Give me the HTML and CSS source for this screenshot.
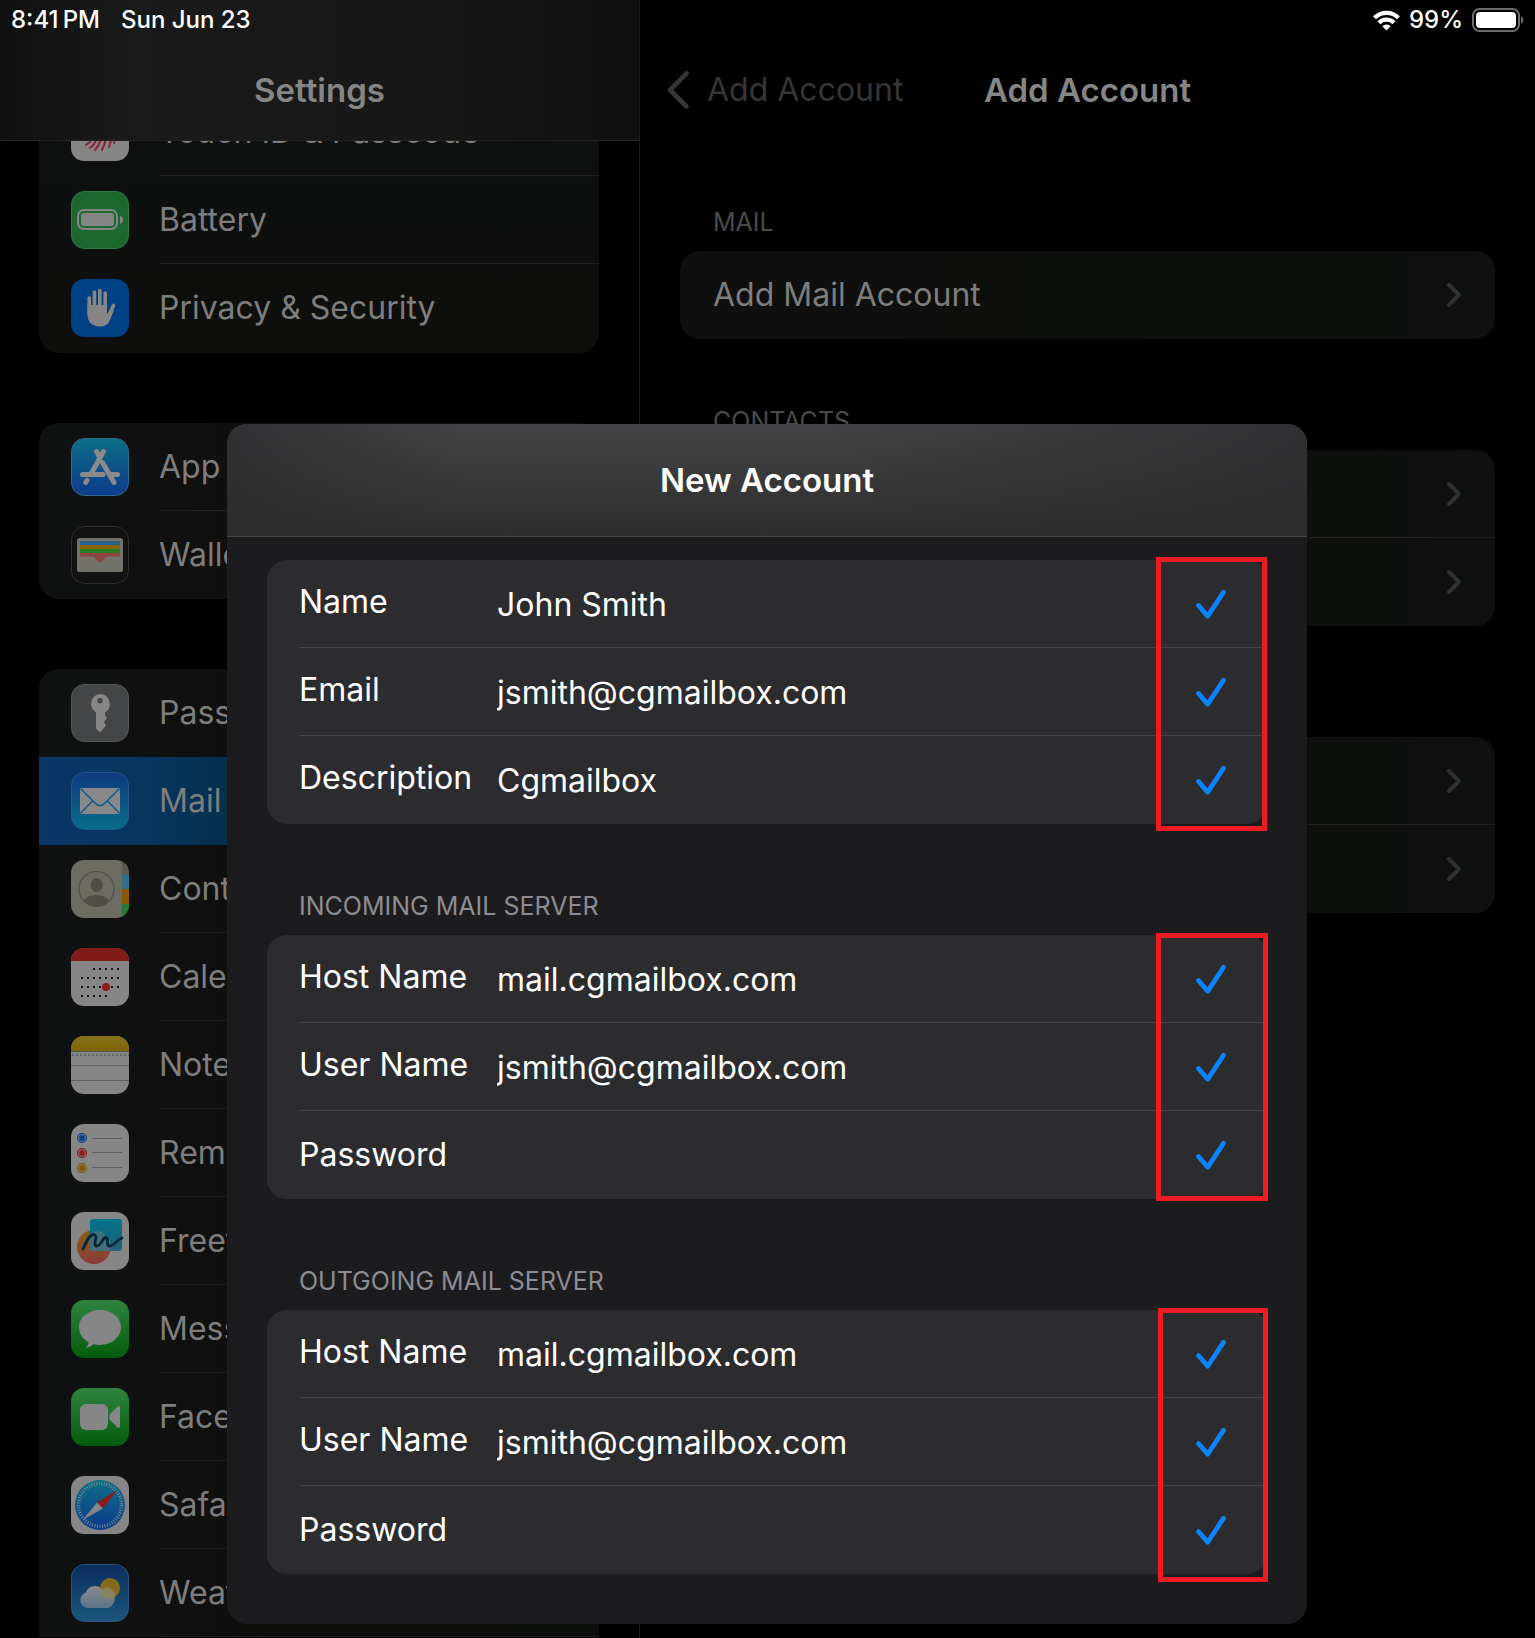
FILE: index.html
```html
<!DOCTYPE html>
<html lang="en">
<head>
<meta charset="utf-8">
<meta name="viewport" content="width=device-width, initial-scale=1">
<title>Settings</title>
<link rel="stylesheet" href="styles.css">
</head>
<body>
<svg class="defs" aria-hidden="true">
  <defs>
    <linearGradient id="g-store" x1="0" y1="0" x2="0" y2="1"><stop offset="0" stop-color="#0c6e85"/><stop offset="1" stop-color="#0d3a8c"/></linearGradient>
    <linearGradient id="g-mail" x1="0" y1="0" x2="0" y2="1"><stop offset="0" stop-color="#0f3880"/><stop offset="1" stop-color="#096e8a"/></linearGradient>
    <linearGradient id="g-green" x1="0" y1="0" x2="0" y2="1"><stop offset="0" stop-color="#2f8340"/><stop offset="1" stop-color="#035d0d"/></linearGradient>
    <linearGradient id="g-notes" x1="0" y1="0" x2="0" y2="1"><stop offset="0" stop-color="#86701d"/><stop offset="1" stop-color="#806500"/></linearGradient>
    <linearGradient id="g-orb" x1="0" y1="0" x2="0" y2="1"><stop offset="0" stop-color="#86600f"/><stop offset="1" stop-color="#8c3a3e"/></linearGradient>
    <linearGradient id="g-pane" x1="0" y1="0" x2="0" y2="1"><stop offset="0" stop-color="#007488"/><stop offset="1" stop-color="#23617c"/></linearGradient>
    <linearGradient id="g-sky" x1="0" y1="0" x2="0" y2="1"><stop offset="0" stop-color="#0a2e5e"/><stop offset="1" stop-color="#1b567c"/></linearGradient>
    <linearGradient id="g-cloud" x1="0" y1="0" x2="0" y2="1"><stop offset="0" stop-color="#8a8b8c"/><stop offset="1" stop-color="#5d7488"/></linearGradient>
    <clipPath id="tile"><rect width="58" height="58" rx="13"/></clipPath>
    <symbol id="chevron" viewBox="0 0 14 24"><path d="M2 2 12 12 2 22" fill="none" stroke="currentColor" stroke-width="4" stroke-linecap="round" stroke-linejoin="round"/></symbol>
    <symbol id="check" viewBox="0 0 30 30"><path d="M2.500 16.500 11.700 27.200 27.500 3.200" fill="none" stroke="currentColor" stroke-width="4.800" stroke-linecap="round" stroke-linejoin="round"/></symbol>
  </defs>
</svg>

<div class="screen">
  <div class="status">
    <time>8:41&#8201;PM</time>
    <span class="status-date">Sun Jun 23</span>
    <svg class="wifi" viewBox="0 0 27 21" aria-label="Wi-Fi"><g fill="none" stroke="#fff" stroke-width="4.200"><path d="M1.500 7.800a17 17 0 0 1 24 0"/><path d="M6 12.700a10.600 10.600 0 0 1 15 0"/></g><path d="M13.500 20.500 9.300 16.200a6 6 0 0 1 8.400 0z" fill="#fff"/></svg>
    <span>99%</span>
    <svg class="cell" viewBox="0 0 52 24" aria-label="Battery level"><rect x="1" y="1" width="46" height="22" rx="6.500" fill="none" stroke="#6d6d6d" stroke-width="2"/><rect x="4" y="4" width="40" height="16" rx="4" fill="#fff"/><path d="M49 8.500c3 .8 3 6.200 0 7z" fill="#6d6d6d"/></svg>
  </div>

  <aside class="sidebar">
    <header class="bar sidebar-bar"><h1>Settings</h1></header>
    <nav class="menu" aria-label="Settings">
      <ul class="card card-first">
        <li><a class="item" href="#touch">
          <svg viewBox="0 0 58 58"><rect width="58" height="58" rx="13" fill="#858585"/><g fill="none" stroke="#8f1f38" stroke-width="2" stroke-linecap="round"><path d="M14 37c3-2 4-5 4-9M15 42c5-3 8-8 8-15M19 45c6-4 8-10 8-18M24 47c5-6 8-12 7-20M31 47c3-6 5-12 4-20M38 44c2-5 3-10 2-17M43 40c1-4 2-8 1-13"/></g></svg>
          <span>Touch ID &amp; Passcode</span></a></li>
        <li><a class="item" href="#battery">
          <svg viewBox="0 0 58 58"><rect x=".5" y=".5" width="57" height="57" rx="13" fill="#1c682f" stroke="#35784a"/><rect x="7" y="19" width="39" height="19" rx="6" fill="none" stroke="#868686" stroke-width="2"/><rect x="10" y="22" width="33" height="13" rx="3" fill="#868686"/><path d="M49 25c4 1 4 6 0 8z" fill="#868686"/></svg>
          <span>Battery</span></a></li>
        <li><a class="item" href="#privacy">
          <svg viewBox="0 0 58 58"><rect width="58" height="58" rx="13" fill="#004085"/><g stroke="#868686" stroke-width="3.600" stroke-linecap="round" fill="none"><path d="M18.200 19v16M23.400 13v18M28.800 11.500v18M34.200 14v18M42.500 26.500 37 38"/></g><path d="M16.400 26h19.600v9l4-5 3 1-4 10c-2 5-6 6.500-10 6.500-8 0-12.600-5-12.600-12z" fill="#868686"/></svg>
          <span>Privacy &amp; Security</span></a></li>
      </ul>

      <ul class="card">
        <li><a class="item" href="#store">
          <svg viewBox="0 0 58 58"><rect x=".5" y=".5" width="57" height="57" rx="13" fill="url(#g-store)" stroke="#2e6b8c"/><g fill="none" stroke="#8b8b8b" stroke-width="5" stroke-linecap="round"><path d="M32.500 13.500 20.500 35M25.500 13.500 28 18M31.500 24.500 43 44.500M11.500 36.500H32M40.500 36.500H46.500M16 42.500 14.700 44.500"/></g></svg>
          <span>App Store</span></a></li>
        <li><a class="item" href="#wallet">
          <svg viewBox="0 0 58 58"><rect x=".5" y=".5" width="57" height="57" rx="13" fill="#111211" stroke="#303131"/><rect x="6" y="12" width="46" height="34" rx="3" fill="#73726a"/><path d="M9 20v-3q0-2 2-2h36q2 0 2 2v3z" fill="#27648a"/><path d="M9 19h40v5H9z" fill="#8a6200"/><path d="M9 23h40v5H9z" fill="#287c25"/><path d="M9 27h40v4h-7c-5 0-6 6-13 6s-8-6-13-6H9z" fill="#8c4440"/><path d="M6 30.500h16c2.500 0 3 6 7 6s4.500-6 7-6h16V43q0 3-3 3H9q-3 0-3-3z" fill="#73726a"/></svg>
          <span>Wallet &amp; Apple Pay</span></a></li>
      </ul>

      <ul class="card card-open">
        <li><a class="item" href="#passwords">
          <svg viewBox="0 0 58 58"><rect x=".5" y=".5" width="57" height="57" rx="13" fill="#444546" stroke="#58595a"/><path fill-rule="evenodd" d="M29 10a10 10 0 0 1 5 18.500v3l2 2.500-3 4 2 3.500-6 7-4-4V28.500A10 10 0 0 1 29 10zm0 4a2.700 2.700 0 1 0 0 5.400 2.700 2.700 0 0 0 0-5.400z" fill="#868686"/></svg>
          <span>Passwords</span></a></li>
        <li><a class="item item-on" href="#mail" aria-current="page">
          <svg viewBox="0 0 58 58"><rect x=".5" y=".5" width="57" height="57" rx="13" fill="url(#g-mail)" stroke="#25588c"/><path d="M9 16h40v26H9z" fill="#888"/><path d="M9.500 16.500 24 31q5 5.500 10 0L48.500 16.500M9.500 41.500 21.500 29M48.500 41.500 36.500 29" fill="none" stroke="#0d5c88" stroke-width="1.600"/></svg>
          <span>Mail</span></a></li>
        <li><a class="item" href="#contacts">
          <svg viewBox="0 0 58 58"><g clip-path="url(#tile)"><path d="M0 0h58v58H0z" fill="#6d6c63"/><path d="M51 0h7v15h-7z" fill="#5c5b53"/><path d="M51 15h7v14h-7z" fill="#2f6f8c"/><path d="M51 29h7v15h-7z" fill="#8c5500"/><path d="M51 44h7v14h-7z" fill="#237b38"/></g><circle cx="25.500" cy="29" r="17.500" fill="none" stroke="#504e49" stroke-width="1.200"/><ellipse cx="25.500" cy="25" rx="6" ry="7" fill="#504e49"/><path d="M13 41c3-8 22-8 25 0-6 7-19 7-25 0z" fill="#504e49"/></svg>
          <span>Contacts</span></a></li>
        <li><a class="item" href="#calendar">
          <svg viewBox="0 0 58 58"><g clip-path="url(#tile)"><path d="M0 0h58v58H0z" fill="#868686"/><path d="M0 0h58v13H0z" fill="#801b17"/></g><path d="M22 21h28M10 30h40M10 39h40M10 48h28" fill="none" stroke="#111" stroke-width="2" stroke-dasharray="2 4"/><circle cx="35" cy="39" r="4" fill="#8a1d18"/></svg>
          <span>Calendar</span></a></li>
        <li><a class="item" href="#notes">
          <svg viewBox="0 0 58 58"><g clip-path="url(#tile)"><path d="M0 0h58v58H0z" fill="#868686"/><path d="M0 0h58v15H0z" fill="url(#g-notes)"/><path d="M0 15.500h58" stroke="#565656"/><path d="M1 19h57" stroke="#666" stroke-width="2" stroke-dasharray="2 2"/><path d="M0 29.500h58M0 44.500h58" stroke="#5e5e60"/></g></svg>
          <span>Notes</span></a></li>
        <li><a class="item" href="#reminders">
          <svg viewBox="0 0 58 58"><rect width="58" height="58" rx="13" fill="#868686"/><path d="M21 14.500h30M21 28.500h30M21 43.500h30" stroke="#5e5e60"/><g fill="none" stroke-width="1.200"><circle cx="11" cy="14" r="4.400" stroke="#084188"/><circle cx="11" cy="29" r="4.400" stroke="#8a1d18"/><circle cx="11" cy="44" r="4.400" stroke="#875400"/></g><circle cx="11" cy="14" r="3" fill="#084188"/><circle cx="11" cy="29" r="3" fill="#8a1d18"/><circle cx="11" cy="44" r="3" fill="#875400"/></svg>
          <span>Reminders</span></a></li>
        <li><a class="item" href="#freeform">
          <svg viewBox="0 0 58 58"><rect width="58" height="58" rx="13" fill="#868686"/><circle cx="23" cy="35" r="17" fill="url(#g-orb)"/><rect x="19" y="7" width="32" height="32" rx="3" fill="url(#g-pane)"/><path d="M19 22q4-3.500 11-2.500Q39 24 40 35l-1.500 4H22q-3 0-3-3z" fill="#5f7478" opacity=".6"/><path d="M12 37C15 31 18 22 23 22.500c5 1-2 11 2.500 11.500 5 0 6-9 9.500-8.500 4 1-1 9 4 8.500 5-1 7-6 12-8" fill="none" stroke="#022538" stroke-width="2.800" stroke-linecap="round"/></svg>
          <span>Freeform</span></a></li>
        <li><a class="item" href="#messages">
          <svg viewBox="0 0 58 58"><rect width="58" height="58" rx="13" fill="url(#g-green)"/><path d="M29 10c11.600 0 21 7.600 21 17.300S40.600 45 29 45c-2.500 0-4.500-.3-6.500-.8-2 1.800-4.300 3-7.500 3.600 1.500-2 2.500-3.300 2.500-5.600C11.500 39 8 33.500 8 27.300 8 17.600 17.400 10 29 10z" fill="#868686"/></svg>
          <span>Messages</span></a></li>
        <li><a class="item" href="#facetime">
          <svg viewBox="0 0 58 58"><rect width="58" height="58" rx="13" fill="url(#g-green)"/><rect x="9" y="16" width="28" height="26" rx="6" fill="#868686"/><path d="M38.500 26.500 46 19q3-2.500 3 1v18q0 3.500-3 1l-7.500-7.500z" fill="#868686"/></svg>
          <span>FaceTime</span></a></li>
        <li><a class="item" href="#safari">
          <svg viewBox="0 0 58 58"><rect width="58" height="58" rx="13" fill="#868686"/><circle cx="29" cy="29" r="25" fill="url(#g-store)"/><circle cx="29" cy="29" r="21.500" fill="none" stroke="#7b8c94" stroke-width="3.500" stroke-dasharray=".9 1.650"/><path d="M46.500 14 32 32.500 26 26.500z" fill="#8a1d18"/><path d="M11.500 44 26 26.500 32 32.500z" fill="#868686"/></svg>
          <span>Safari</span></a></li>
        <li><a class="item" href="#weather">
          <svg viewBox="0 0 58 58"><rect x=".5" y=".5" width="57" height="57" rx="13" fill="url(#g-sky)" stroke="#2b5580"/><circle cx="39" cy="24" r="10" fill="#836c1c"/><path d="M16.500 44a7.800 7.800 0 0 1-1.800-15.200A9.500 9.500 0 0 1 31 25.500 9.500 9.500 0 0 1 37 44z" fill="url(#g-cloud)"/><path d="M31 25.500a8 8 0 0 1 13 8.200c-5 1.800-12 1.300-13.500-3.200z" fill="#8b8455" opacity=".8"/></svg>
          <span>Weather</span></a></li>
      </ul>
    </nav>
  </aside>

  <main class="detail">
    <header class="bar detail-bar">
      <button class="back" type="button"><svg viewBox="0 0 22 38" aria-hidden="true"><path d="M19.500 2.500 3 19l16.500 16.500" fill="none" stroke="currentColor" stroke-width="4.600" stroke-linecap="round" stroke-linejoin="round"/></svg>Add Account</button>
      <h2>Add Account</h2>
    </header>
    <section class="group">
      <h3 class="caption">MAIL</h3>
      <div class="card"><button class="choice" type="button"><span>Add Mail Account</span><svg><use href="#chevron"/></svg></button></div>
    </section>
    <section class="group">
      <h3 class="caption">CONTACTS</h3>
      <div class="card">
        <button class="choice" type="button" aria-label="LDAP"><svg><use href="#chevron"/></svg></button>
        <button class="choice" type="button" aria-label="CardDAV"><svg><use href="#chevron"/></svg></button>
      </div>
    </section>
    <section class="group" aria-label="Calendars">
      <div class="caption"></div>
      <div class="card">
        <button class="choice" type="button" aria-label="CalDAV"><svg><use href="#chevron"/></svg></button>
        <button class="choice" type="button" aria-label="Subscription"><svg><use href="#chevron"/></svg></button>
      </div>
    </section>
  </main>

  <div class="overlay">
    <form class="sheet" role="dialog" aria-labelledby="sheet-title">
      <header class="sheet-bar"><h2 id="sheet-title">New Account</h2></header>
      <section class="fields">
        <div class="field"><label for="name">Name</label><input id="name" type="text" value="John Smith"><svg><use href="#check"/></svg></div>
        <div class="field"><label for="email">Email</label><input id="email" type="text" value="jsmith@cgmailbox.com"><svg><use href="#check"/></svg></div>
        <div class="field"><label for="desc">Description</label><input id="desc" type="text" value="Cgmailbox"><svg><use href="#check"/></svg></div>
        <div class="mark mark-first"></div>
      </section>
      <h3 class="caption">INCOMING MAIL SERVER</h3>
      <section class="fields">
        <div class="field"><label for="in-host">Host Name</label><input id="in-host" type="text" value="mail.cgmailbox.com"><svg><use href="#check"/></svg></div>
        <div class="field"><label for="in-user">User Name</label><input id="in-user" type="text" value="jsmith@cgmailbox.com"><svg><use href="#check"/></svg></div>
        <div class="field field-secret"><label for="in-pass">Password</label><input id="in-pass" type="password"><svg><use href="#check"/></svg></div>
        <div class="mark mark-second"></div>
      </section>
      <h3 class="caption">OUTGOING MAIL SERVER</h3>
      <section class="fields">
        <div class="field"><label for="out-host">Host Name</label><input id="out-host" type="text" value="mail.cgmailbox.com"><svg><use href="#check"/></svg></div>
        <div class="field"><label for="out-user">User Name</label><input id="out-user" type="text" value="jsmith@cgmailbox.com"><svg><use href="#check"/></svg></div>
        <div class="field field-secret"><label for="out-pass">Password</label><input id="out-pass" type="password"><svg><use href="#check"/></svg></div>
        <div class="mark mark-third"></div>
      </section>
    </form>
  </div>
</div>
</body>
</html>
```
FILE: styles.css
```css
* { box-sizing: border-box; }

body {
  margin: 0;
  background: #000;
  color: #7e7e7e;
  font-family: Inter, "Liberation Sans", sans-serif;
  font-size: 32px;
  line-height: 40px;
}

h1, h2, h3, ul { margin: 0; padding: 0; font: inherit; }
ul { list-style: none; }
button, input { font: inherit; color: inherit; background: none; border: 0; padding: 0; }
.defs { position: absolute; width: 0; height: 0; }

.screen {
  position: relative;
  display: grid;
  grid-template-columns: 640px minmax(0, 1fr);
  min-height: 100vh;
  overflow: hidden;
}

/* Status bar, over both columns */
.status {
  position: absolute;
  z-index: 3;
  inset: 0 0 auto 0;
  display: flex;
  align-items: center;
  height: 40px;
  padding: 0 11px;
  color: #fff;
  font-size: 24px;
  font-weight: 500;
}
.status-date { margin: 0 auto 0 21px; }
.wifi { width: 27px; height: 21px; margin-right: 9px; }
.cell { width: 52px; height: 24px; margin-left: 9px; }

/* Column headers */
.bar { height: 140px; padding-top: 40px; display: grid; align-items: center; }
.bar h1, .bar h2 { font-size: 33px; font-weight: 600; color: #868686; text-align: center; }
.sidebar-bar {
  position: relative;
  z-index: 1;
  height: 141px;
  border-bottom: 1px solid #252525;
  background: linear-gradient(90deg, #101010, #1a1a1a 20%, #171717 70%, #0f0f0f);
}
.detail-bar { grid-template-columns: 1fr auto 1fr; }
.back {
  display: flex;
  align-items: center;
  gap: 18px;
  padding-left: 27px;
  color: #363636;
}
.back svg { width: 22px; height: 38px; }

/* Sidebar list */
.sidebar { border-right: 1px solid #1a1a1a; }
.menu {
  display: flex;
  flex-direction: column;
  gap: 70px;
  margin-top: -53px;
  padding: 0 40px 0 39px;
}
.card {
  border-radius: 20px;
  overflow: hidden;
  background: linear-gradient(90deg, #101112, #0e0f0c 50%, #0d0f0b);
}
.card-first { padding-bottom: 1px; background: linear-gradient(#0f1011, #0e100f 50%, #0e0f0c); }
.card-open { border-radius: 20px 20px 0 0; }
.item {
  display: flex;
  align-items: center;
  height: 88px;
  padding-left: 32px;
  color: inherit;
  text-decoration: none;
}
.item svg { flex: none; width: 58px; height: 58px; }
.item span {
  flex: 1;
  margin-left: 30px;
  line-height: 88px;
  box-shadow: inset 0 -1px #20211f;
  white-space: nowrap;
}
.card:not(.card-open) li:last-child span,
.item-on span,
li:has(+ li .item-on) span { box-shadow: none; }
.item-on { background: linear-gradient(90deg, #0a3767, #06355d 20%, #042f4c 36%); }

/* Detail column */
.group { padding: 0 40px; }
.caption {
  height: 111px;
  padding: 67px 33px 14px;
  font-size: 25px;
  line-height: 30px;
  color: #4a4a4b;
}
.detail .card { background: linear-gradient(90deg, #0f0f0f, #0d100c 70%, #0f1010); }
.choice {
  display: flex;
  align-items: center;
  width: 100%;
  height: 88px;
  padding: 0 34px 0 33px;
}
.choice:not(:last-child) { box-shadow: inset 0 -1px #20211f; }
.choice svg { width: 14px; height: 24px; margin-left: auto; color: #303131; }

/* New account sheet */
.overlay {
  position: absolute;
  z-index: 4;
  inset: 424px 0 auto 0;
  padding-right: 1px;
}
.sheet {
  width: 100%;
  max-width: 1080px;
  margin: 0 auto;
  padding-bottom: 50px;
  border-radius: 20px;
  overflow: hidden;
  background: #1c1c1e;
  color: #fff;
}
.sheet-bar {
  display: grid;
  place-items: center;
  height: 113px;
  margin-bottom: 23px;
  border-bottom: 1px solid #464647;
  background:
    linear-gradient(90deg, rgba(44, 44, 46, .8), rgba(44, 44, 46, 0) 22%, rgba(44, 44, 46, 0) 55%, rgba(44, 44, 46, .8)),
    linear-gradient(#434345, #2e2e2f);
}
.sheet-bar h2 { font-size: 33px; font-weight: 600; }
.sheet .caption { padding-left: 72px; color: #8d8d93; }
.fields {
  position: relative;
  margin: 0 40px;
  padding-left: 32px;
  border-radius: 20px;
  background: #2c2c2e;
}
.field {
  display: flex;
  align-items: center;
  height: 88px;
  padding-right: 41px;
}
.field:not(:nth-child(3)) { box-shadow: inset 0 -1px #444446; }
.field label { width: 198px; padding-bottom: 4px; }
.field-secret label { padding-bottom: 0; }
.field input { flex: 1; min-width: 0; height: 60px; outline: 0; }
.field svg { width: 30px; height: 30px; color: #0a84ff; }

/* Red outlines drawn over the tick column */
.mark { position: absolute; border: 5px solid #ed1c24; pointer-events: none; }
.mark-first { inset: -3px 0 -7px auto; width: 111px; }
.mark-second { inset: -2px -1px -2px auto; width: 112px; }
.mark-third { inset: -2px -1px -8px auto; width: 110px; }
```
